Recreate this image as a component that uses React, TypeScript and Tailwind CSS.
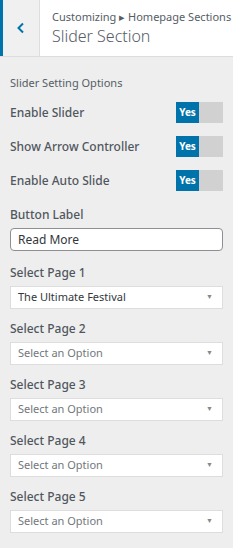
import React from 'react';

const toggles = ['Enable Slider', 'Show Arrow Controller', 'Enable Auto Slide'];
const pages = [
  { label: 'Select Page 1', value: 'The Ultimate Festival', set: true },
  { label: 'Select Page 2', value: 'Select an Option', set: false },
  { label: 'Select Page 3', value: 'Select an Option', set: false },
  { label: 'Select Page 4', value: 'Select an Option', set: false },
  { label: 'Select Page 5', value: 'Select an Option', set: false },
];

function Toggle() {
  return (
    <div className="flex h-[21px] w-[47px]">
      <div className="flex w-[23px] items-center justify-center bg-[#0073aa] text-[10px] font-bold text-white">Yes</div>
      <div className="flex-1 bg-[#d1d1d1]" />
    </div>
  );
}

function SelectBox({ value, set }: { value: string; set: boolean }) {
  return (
    <div className="flex h-[23px] items-center justify-between border border-[#dddddd] bg-white pl-[7px] pr-[9px]">
      <span className={`text-[11px] ${set ? 'text-[#32373c]' : 'text-[#72777c]'}`}>{value}</span>
      <span className="text-[7px] text-[#888]">▼</span>
    </div>
  );
}

export default function App() {
  return (
    <div className="h-[548px] w-[233px] bg-[#eeeeee] font-['Noto_Sans','Open_Sans',sans-serif] text-[#555d66]">
      {/* Header */}
      <div className="flex h-[57px] border-b border-[#dddddd] bg-white">
        <div className="flex w-[40px] items-center justify-center border-l-[3px] border-r border-l-[#0073aa] border-r-[#dddddd] bg-[#f0f0f0]">
          <svg width="10" height="12" viewBox="0 0 10 12" fill="none">
            <path d="M7 1.5 L2.5 6 L7 10.5" stroke="#0073aa" strokeWidth="2" />
          </svg>
        </div>
        <div className="flex flex-col justify-center pl-[12px]">
          <div className="text-[11px] leading-[16px] text-[#555d66]">Customizing ▸ Homepage Sections</div>
          <div className="text-[16px] font-light leading-[22px] text-[#555d66]">Slider Section</div>
        </div>
      </div>

      <div className="px-[10px]">
        <div className="pt-[18px] text-[11px] leading-[16px]">Slider Setting Options</div>

        <div className="mt-[11px] flex flex-col gap-[13px]">
          {toggles.map((t) => (
            <div key={t} className="flex items-center justify-between">
              <span className="text-[12px] font-medium text-[#50575e]">{t}</span>
              <Toggle />
            </div>
          ))}
        </div>

        <div className="mt-[16px] text-[12px] font-medium leading-[16px] text-[#50575e]">Button Label</div>
        <div className="mt-[5px] flex h-[23px] items-center rounded-[4px] border border-[#8c8f94] bg-white px-[7px] text-[12px] text-[#32373c]">
          Read More
        </div>

        {pages.map((p, i) => (
          <div key={p.label} className={i === 0 ? 'mt-[14px]' : 'mt-[12px]'}>
            <div className="text-[12px] font-medium leading-[16px] text-[#50575e]">{p.label}</div>
            <div className="mt-[5px]">
              <SelectBox value={p.value} set={p.set} />
            </div>
          </div>
        ))}
      </div>
    </div>
  );
}
